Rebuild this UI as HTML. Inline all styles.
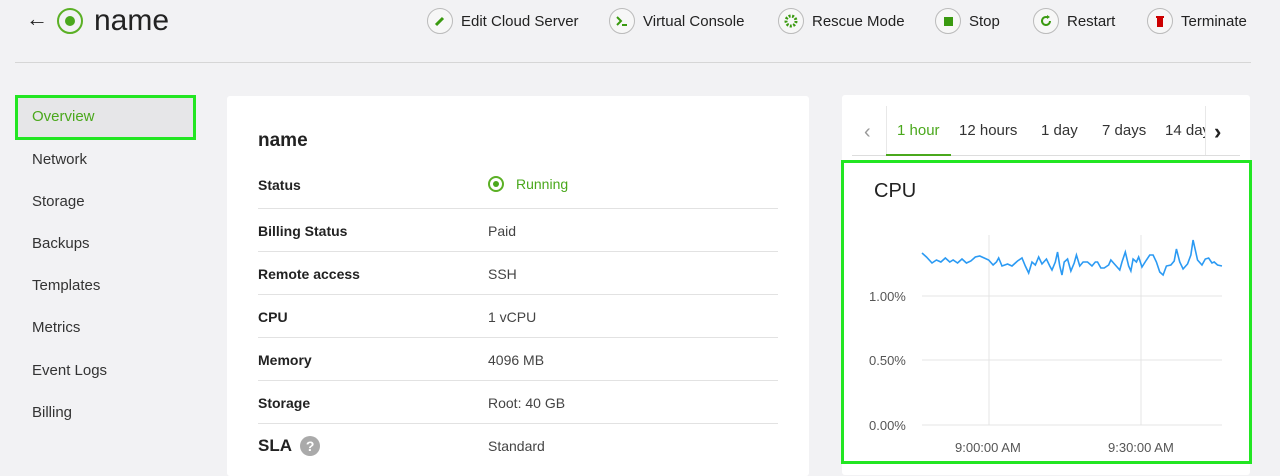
<!DOCTYPE html>
<html><head><meta charset="utf-8"><style>
*{box-sizing:border-box;margin:0;padding:0}
body{width:1280px;height:471px;overflow:hidden;background:#f2f2f4;font-family:"Liberation Sans",sans-serif;color:#222;position:relative}
.a{position:absolute}
.btn{position:absolute;top:8px;height:26px;display:flex;align-items:center;font-size:15px;color:#222}
.ic{width:26px;height:26px;border:1px solid #bbb;border-radius:50%;display:flex;align-items:center;justify-content:center;margin-right:8px;background:#f7f7f7}
.nav{position:absolute;left:32px;font-size:15px;color:#333}
.row{position:absolute;left:258px;width:520px;height:43px;border-bottom:1px solid #e2e2e2;font-size:14px}
.row b{position:absolute;left:0;top:14px;font-weight:bold;color:#222}
.row span{position:absolute;left:230px;top:14px;color:#444}
.tab{position:absolute;top:122px;font-size:15px;color:#333}
</style></head><body>
<div class="a" style="left:26px;top:6px;font-size:22px">&#8592;</div>
<div class="a" style="left:57px;top:8px;width:26px;height:26px;border:2px solid #5bb025;border-radius:50%"><div style="width:10px;height:10px;background:#4aa81c;border-radius:50%;margin:6px"></div></div>
<div class="a" style="left:94px;top:4px;font-size:30px;color:#222">name</div>

<div class="btn" style="left:427px"><div class="ic"><svg width="14" height="14"><path d="M3 11 L10 4" stroke="#3a9a10" stroke-width="3"/></svg></div>Edit Cloud Server</div>
<div class="btn" style="left:609px"><div class="ic"><svg width="14" height="14"><path d="M2 3 L6 7 L2 11 M7 11 H12" stroke="#3a9a10" stroke-width="2" fill="none"/></svg></div>Virtual Console</div>
<div class="btn" style="left:778px"><div class="ic"><svg width="16" height="16"><circle cx="8" cy="8" r="5" stroke="#3a9a10" stroke-width="3" fill="none" stroke-dasharray="2 1.5"/></svg></div>Rescue Mode</div>
<div class="btn" style="left:935px"><div class="ic"><div style="width:9px;height:9px;background:#3a9a10"></div></div>Stop</div>
<div class="btn" style="left:1033px"><div class="ic"><svg width="14" height="14"><path d="M11 7 A4 4 0 1 1 9 3.5" stroke="#3a9a10" stroke-width="2" fill="none"/><path d="M8 1 L11 3 L8 5Z" fill="#3a9a10"/></svg></div>Restart</div>
<div class="btn" style="left:1147px"><div class="ic"><svg width="14" height="14"><rect x="3" y="2" width="8" height="2" fill="#c00"/><rect x="4" y="4" width="6" height="9" fill="#c00"/></svg></div>Terminate</div>

<div class="a" style="left:15px;top:62px;width:1236px;height:1px;background:#d6d6d6"></div>

<div class="a" style="left:15px;top:95px;width:181px;height:45px;border:3px solid #22e622;background:#e6e6e8"></div>
<div class="nav" style="top:108px;color:#4aa81c">Overview</div>
<div class="nav" style="top:151px">Network</div>
<div class="nav" style="top:193px">Storage</div>
<div class="nav" style="top:235px">Backups</div>
<div class="nav" style="top:277px">Templates</div>
<div class="nav" style="top:319px">Metrics</div>
<div class="nav" style="top:362px">Event Logs</div>
<div class="nav" style="top:404px">Billing</div>

<div class="a" style="left:227px;top:96px;width:582px;height:380px;background:#fff;border-radius:3px"></div>
<div class="a" style="left:258px;top:130px;font-size:19px;font-weight:bold">name</div>
<div class="row" style="top:166px"><b style="top:11px">Status</b><span style="left:230px;color:#4aa81c;top:10px"><span style="position:static;display:inline-block;width:16px;height:16px;border:2px solid #5bb025;border-radius:50%;vertical-align:-3px;margin-right:12px;padding:3px"><span style="position:static;display:block;width:6px;height:6px;background:#4aa81c;border-radius:50%"></span></span>Running</span></div>
<div class="row" style="top:209px"><b>Billing Status</b><span>Paid</span></div>
<div class="row" style="top:252px"><b>Remote access</b><span>SSH</span></div>
<div class="row" style="top:295px"><b>CPU</b><span>1 vCPU</span></div>
<div class="row" style="top:338px"><b>Memory</b><span>4096 MB</span></div>
<div class="row" style="top:381px"><b>Storage</b><span>Root: 40 GB</span></div>
<div class="row" style="top:424px;border:none"><b style="font-size:17px;top:12px">SLA <span style="position:static;display:inline-block;width:20px;height:20px;border-radius:50%;background:#aaa;color:#fff;text-align:center;font-size:14px;line-height:20px;margin-left:4px">?</span></b><span>Standard</span></div>

<div class="a" style="left:842px;top:95px;width:408px;height:380px;background:#fff;border-radius:3px"></div>
<div class="a" style="left:864px;top:121px;font-size:20px;color:#999">&#8249;</div>
<div class="a" style="left:1214px;top:119px;font-size:22px;font-weight:bold;color:#222">&#8250;</div>
<div class="tab" style="left:897px;color:#4aa81c">1 hour</div>
<div class="tab" style="left:959px">12 hours</div>
<div class="tab" style="left:1041px">1 day</div>
<div class="tab" style="left:1102px">7 days</div>
<div class="tab" style="left:1165px;width:40px;overflow:hidden;white-space:nowrap">14 days</div>
<div class="a" style="left:886px;top:106px;width:1px;height:50px;background:#e8e8e8"></div>
<div class="a" style="left:1205px;top:106px;width:1px;height:50px;background:#e8e8e8"></div>
<div class="a" style="left:852px;top:155px;width:388px;height:1px;background:#ddd"></div>
<div class="a" style="left:886px;top:154px;width:65px;height:2px;background:#4aa81c"></div>

<div class="a" style="left:841px;top:160px;width:411px;height:304px;border:3px solid #22e622"></div>
<div class="a" style="left:874px;top:180px;font-size:20px">CPU</div>
<svg class="a" style="left:0;top:0" width="1280" height="471">
<g stroke="#e4e4e4" stroke-width="1"><line x1="922" y1="296" x2="1222" y2="296"/><line x1="922" y1="360" x2="1222" y2="360"/><line x1="922" y1="425" x2="1222" y2="425"/><line x1="989" y1="235" x2="989" y2="425"/><line x1="1141" y1="235" x2="1141" y2="425"/></g>
<polyline transform="translate(922,0) scale(1.111,1) translate(-922,0)" vector-effect="non-scaling-stroke" fill="none" stroke="#2b9af3" stroke-width="1.6" points="922,253 926,257 931,263 935,260 939,262 943,258 947,262 950,260 954,263 958,259 962,263 966,261 970,257 974,256 978,258 982,260 986,265 989,262 991,258 994,266 999,264 1003,266 1008,261 1012,258 1015,266 1018,273 1021,262 1024,265 1027,257 1030,264 1034,259 1037,266 1039,270 1042,262 1044,252 1046,266 1048,275 1050,262 1053,259 1056,271 1059,263 1061,255 1064,266 1067,262 1071,262 1075,266 1078,262 1080,262 1083,268 1086,268 1090,265 1092,260 1096,265 1100,270 1102,262 1105,252 1108,266 1110,271 1112,259 1115,262 1117,257 1120,267 1124,260 1127,255 1130,255 1133,262 1136,272 1139,275 1142,266 1146,265 1149,261 1151,249 1154,262 1157,269 1161,264 1164,255 1166,240 1170,260 1174,265 1177,259 1180,258 1183,263 1185,262 1188,265 1192,266"/>
<g font-family="Liberation Sans" font-size="13" fill="#555"><text x="869" y="301">1.00%</text><text x="869" y="365">0.50%</text><text x="869" y="430">0.00%</text><text x="955" y="452">9:00:00 AM</text><text x="1108" y="452">9:30:00 AM</text></g>
</svg>
</body></html>
